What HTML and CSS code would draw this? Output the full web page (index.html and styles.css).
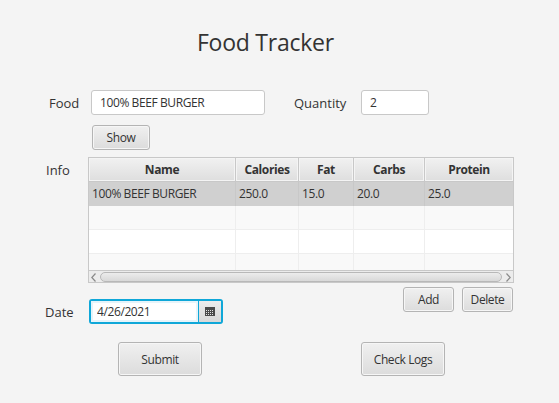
FILE: index.html
```html
<!DOCTYPE html>
<html lang="en">
<head>
<meta charset="utf-8">
<title>Food Tracker</title>
<link rel="stylesheet" href="styles.css">
</head>
<body>
<main class="app">
  <h1 class="title">Food Tracker</h1>
  <div class="food-row">
    <label class="label food-label">Food</label>
    <input class="field food-field" type="text" value="100% BEEF BURGER">
    <label class="label qty-label">Quantity</label>
    <input class="field qty-field" type="text" value="2">
  </div>
  <button class="btn show-btn">Show</button>
  <div class="info-row">
    <span class="label info-label">Info</span>
    <div class="table">
      <div class="tr head">
        <div>Name</div><div>Calories</div><div>Fat</div><div>Carbs</div><div>Protein</div>
      </div>
      <div class="tr selected">
        <div>100% BEEF BURGER</div><div>250.0</div><div>15.0</div><div>20.0</div><div>25.0</div>
      </div>
      <div class="tr odd"><div></div><div></div><div></div><div></div><div></div></div>
      <div class="tr even"><div></div><div></div><div></div><div></div><div></div></div>
      <div class="tr odd last"><div></div><div></div><div></div><div></div><div></div></div>
      <div class="scrollbar">
        <svg class="arrow" width="5" height="9" viewBox="0 0 5 9"><path d="M4.500 .5 .8 4.500l3.700 4" fill="none" stroke="#8a8a8a" stroke-width="1.200"/></svg>
        <div class="thumb"></div>
        <svg class="arrow" width="5" height="9" viewBox="0 0 5 9"><path d="M.5 .5l3.700 4-3.700 4" fill="none" stroke="#8a8a8a" stroke-width="1.200"/></svg>
      </div>
    </div>
  </div>
  <div class="date-row">
    <div class="date-group">
      <label class="label date-label">Date</label>
      <div class="picker">
        <input class="picker-input" type="text" value="4/26/2021">
        <div class="picker-btn">
          <svg width="10" height="9" viewBox="0 0 10 9"><path fill="#4a4a4a" fill-rule="evenodd" d="M0 0h10v9H0zM1 3v1h1V3zm2 0v1h1V3zm2 0v1h1V3zm2 0v1h1V3zM1 5v1h1V5zm2 0v1h1V5zm2 0v1h1V5zm2 0v1h1V5zM1 7v1h1V7zm2 0v1h1V7zm2 0v1h1V7zm2 0v1h1V7z"/></svg>
        </div>
      </div>
    </div>
    <div class="actions">
      <button class="btn small-btn">Add</button>
      <button class="btn small-btn">Delete</button>
    </div>
  </div>
  <div class="submit-row">
    <button class="btn big-btn">Submit</button>
    <button class="btn big-btn">Check Logs</button>
  </div>
</main>
</body>
</html>
```
FILE: styles.css
```css
* { box-sizing: border-box; }
html, body { margin: 0; padding: 0; }
body {
  width: 559px;
  height: 403px;
  overflow: hidden;
  background: #f4f4f4;
  color: #333;
  font-family: "Open Sans", "Noto Sans", sans-serif;
  font-size: 12px;
  letter-spacing: -0.4px;
}
.app { display: flex; flex-direction: column; height: 403px; }
.title {
  margin: 26px 0 0 197px;
  height: 33px;
  font-size: 23px;
  line-height: 32px;
  font-weight: 400;
  letter-spacing: -0.25px;
  color: #333;
  white-space: nowrap;
}
.label { font-size: 13px; color: #333; line-height: 18px; letter-spacing: 0; }
.food-row { display: flex; align-items: center; margin: 31px 0 0 49px; height: 25px; }
.food-label { width: 42px; }
.qty-label { margin-left: 29px; width: 67px; }
.field {
  height: 25px;
  padding: 0 8px;
  border: 1px solid #c8c8c8;
  border-radius: 3px;
  background: #fff;
  font: inherit;
  letter-spacing: inherit;
  color: #333;
  outline: none;
}
.food-field { width: 174px; }
.qty-field { width: 68px; }
.btn {
  border: 1px solid #b4b4b4;
  border-radius: 3px;
  background: linear-gradient(#f0f0f0, #dcdcdc);
  box-shadow: inset 0 0 0 1px #f6f6f6;
  font: inherit;
  letter-spacing: inherit;
  color: #333;
  padding: 0;
}
.show-btn { width: 58px; height: 25px; margin: 10px 0 0 92px; }
.info-row { display: flex; margin: 7px 0 0 46px; }
.info-label { width: 42px; margin-top: 4px; }
.table { width: 426px; height: 126px; border: 1px solid #c8c8c8; background: #fff; overflow: hidden; }
.tr { display: grid; grid-template-columns: 147px 63px 55px 71px 88px; height: 24px; }
.tr > div { border-right: 1px solid #eee; padding-left: 3px; line-height: 23px; white-space: nowrap; }
.tr > div:last-child { border-right: 0; }
.head { height: 24px; background: linear-gradient(#f1f1f1, #dedede); border-bottom: 1px solid #c8c8c8; }
.head > div {
  border-right: 1px solid #c8c8c8;
  box-shadow: inset 0 0 0 1px #f4f4f4;
  padding: 0;
  text-align: center;
  font-weight: 700;
  color: #333;
}
.selected { background: #d0d0d0; }
.selected > div { border-right-color: #c8c8c8; }
.odd { background: #f9f9f9; border-bottom: 1px solid #eee; }
.even { background: #fff; border-bottom: 1px solid #eee; }
.last { height: 16px; border-bottom: 0; }
.scrollbar {
  display: flex;
  align-items: center;
  gap: 4px;
  height: 13px;
  padding: 0 2px 0 2px;
  background: #ececec;
  border-top: 1px solid #c8c8c8;
}
.arrow { flex: none; }
.thumb {
  flex: 1;
  height: 10px;
  border: 1px solid #b8b8b8;
  border-radius: 5px;
  background: linear-gradient(#ececec, #d8d8d8);
}
.date-row { display: flex; justify-content: space-between; align-items: flex-start; margin: 4px 46px 0 45px; }
.date-group { display: flex; align-items: center; margin-top: 12px; }
.date-label { width: 44px; }
.picker { display: flex; width: 134px; height: 25px; border: 2px solid #0fa7d8; border-radius: 3px; background: #e6f4fa; }
.picker-input {
  width: 107px;
  height: 21px;
  border: 0;
  padding: 0 6px;
  background: #fff;
  box-shadow: inset 0 0 0 2px #e6f4fa;
  font: inherit;
  letter-spacing: inherit;
  color: #333;
  outline: none;
}
.picker-btn {
  flex: 1;
  display: flex;
  align-items: center;
  justify-content: center;
  border-left: 1px solid #0fa7d8;
  background: linear-gradient(#ececec, #d8d8d8);
}
.actions { display: flex; gap: 8px; }
.small-btn { width: 51px; height: 25px; }
.submit-row { display: flex; gap: 159px; margin: 18px 0 0 118px; }
.big-btn { width: 84px; height: 34px; }
```
